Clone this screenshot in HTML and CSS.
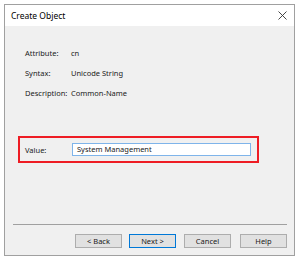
FILE: index.html
```html
<!DOCTYPE html>
<html>
<head>
<meta charset="utf-8">
<link rel="stylesheet" href="styles.css">
</head>
<body>
<div class="window">
  <div class="titlebar">
    <span class="title">Create Object</span>
    <svg class="close" width="9" height="9" viewBox="0 0 9 9"><path d="M0.5 0.5 L8.5 8.5 M8.5 0.5 L0.5 8.5" stroke="#333" stroke-width="0.9" fill="none"/></svg>
  </div>
  <div class="content">
    <div class="info">
      <div class="row"><span class="label">Attribute:</span><span class="val">cn</span></div>
      <div class="row"><span class="label">Syntax:</span><span class="val">Unicode String</span></div>
      <div class="row"><span class="label">Description:</span><span class="val">Common-Name</span></div>
    </div>
    <div class="highlight">
      <span class="label">Value:</span>
      <div class="input">System Management</div>
    </div>
    <div class="spacer"></div>
    <div class="sep"></div>
    <div class="buttons">
      <button class="btn">&lt; Back</button>
      <button class="btn default">Next &gt;</button>
      <button class="btn cancel">Cancel</button>
      <button class="btn help">Help</button>
    </div>
  </div>
</div>
</body>
</html>
```
FILE: styles.css
```css
html, body {
  margin: 0;
  padding: 0;
  background: #ffffff;
}
body {
  font-family: "Noto Sans", "Open Sans", sans-serif;
  font-size: 7.5px;
  color: #1a1a1a;
}
.window {
  margin: 4px 0 0 4px;
  width: 289px;
  height: 250px;
  border: 1px solid #a0a0a0;
  display: flex;
  flex-direction: column;
  box-sizing: content-box;
}
.titlebar {
  height: 21px;
  background: #ffffff;
  display: flex;
  align-items: center;
  justify-content: space-between;
  padding: 0 7px 0 6px;
}
.title {
  font-size: 8.5px;
  color: #000;
}
.close {
  display: block;
}
.content {
  flex: 1;
  background: #f0f0f0;
  display: flex;
  flex-direction: column;
  padding: 0 7px 0 8px;
}
.info {
  padding: 21px 0 0 12px;
  display: flex;
  flex-direction: column;
  gap: 9px;
}
.row {
  display: flex;
  height: 11px;
  align-items: center;
}
.label {
  width: 46px;
  flex: none;
}
.highlight {
  margin: 38px 0 0 5px;
  width: 232px;
  height: 23px;
  border: 2px solid #ee1c24;
  display: flex;
  align-items: center;
  padding-left: 5px;
  box-sizing: content-box;
}
.highlight .label {
  width: 47px;
}
.input {
  width: 173px;
  height: 11px;
  border: 1px solid #7eb4ea;
  background: #fff;
  display: flex;
  align-items: center;
  padding-left: 4px;
  line-height: 11px;
}
.spacer {
  flex: 1;
}
.sep {
  height: 1px;
  background: #a0a0a0;
}
.buttons {
  display: flex;
  justify-content: flex-end;
  gap: 7px;
  padding: 9px 0 7px 0;
}
.btn {
  width: 47px;
  height: 14px;
  border: 1px solid #adadad;
  background: #e1e1e1;
  font-family: inherit;
  font-size: 7.5px;
  color: #1a1a1a;
  padding: 0;
  margin: 0;
  line-height: 12px;
}
.btn.default {
  border-color: #0078d7;
}
.btn.cancel {
  margin-left: 1px;
}
.btn.help {
  margin-left: 2px;
}
```
